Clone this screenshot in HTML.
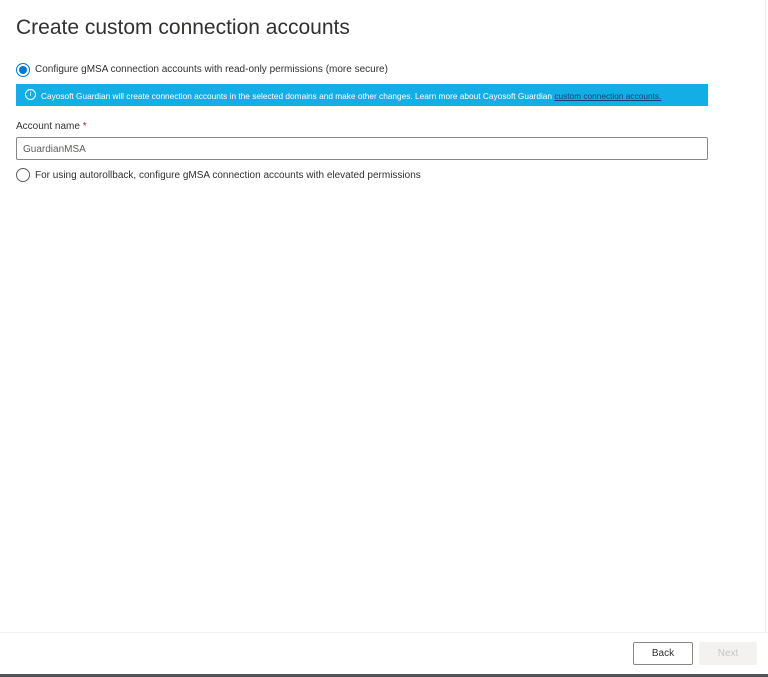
<!DOCTYPE html>
<html><head><style>
body{margin:0;width:768px;height:677px;background:#fff;font-family:"Segoe UI","Liberation Sans",sans-serif;color:#323130;position:relative;overflow:hidden}
.abs{position:absolute}
h1{position:absolute;left:16px;top:16px;margin:0;font-size:21px;font-weight:400;color:#323130}
.radio{position:absolute;width:12px;height:12px;border:1px solid #605e5c;border-radius:50%}
.radio.on{border-color:#0078d4}
.radio.on::after{content:"";position:absolute;left:2px;top:2px;width:8px;height:8px;border-radius:50%;background:#0078d4}
.t{position:absolute;font-size:10px;white-space:nowrap}
</style></head><body>
<div class="abs" style="left:765px;top:0;width:1px;height:632px;background:#eaeaea"></div>
<h1>Create custom connection accounts</h1>
<div class="radio on" style="left:16px;top:63px"></div>
<div class="t" style="left:35px;top:64px">Configure gMSA connection accounts with read-only permissions (more secure)</div>
<div class="abs" style="left:16px;top:84px;width:692px;height:22px;background:#14aee6"></div>
<div class="abs" style="left:25px;top:89px;width:9px;height:9px;border:1px solid #fff;border-radius:50%;color:#fff;font-size:7px;text-align:center;line-height:9px">i</div>
<div class="t" style="left:41px;top:91px;font-size:8.3px;color:#fff">Cayosoft Guardian will create connection accounts in the selected domains and make other changes. Learn more about Cayosoft Guardian <span style="color:#1f3a7a;text-decoration:underline">custom connection accounts.</span></div>
<div class="t" style="left:16px;top:121px">Account name <span style="color:#a4262c">*</span></div>
<div class="abs" style="left:16px;top:137px;width:690px;height:21px;border:1px solid #8a8886;border-radius:2px"></div>
<div class="t" style="left:23px;top:144px;color:#605e5c">GuardianMSA</div>
<div class="radio" style="left:16px;top:168px"></div>
<div class="t" style="left:35px;top:170px">For using autorollback, configure gMSA connection accounts with elevated permissions</div>
<div class="abs" style="left:0;top:632px;width:768px;height:1px;background:#f0f0f0"></div>
<div class="abs" style="left:633px;top:642px;width:58px;height:21px;border:1px solid #8a8886;border-radius:2px;font-size:10px;text-align:center;line-height:21px">Back</div>
<div class="abs" style="left:699px;top:642px;width:58px;height:23px;background:#f3f2f1;border-radius:2px;font-size:10px;text-align:center;line-height:23px;color:#c8c6c4">Next</div>
<div class="abs" style="left:0;top:674px;width:768px;height:3px;background:#505458"></div>
</body></html>
